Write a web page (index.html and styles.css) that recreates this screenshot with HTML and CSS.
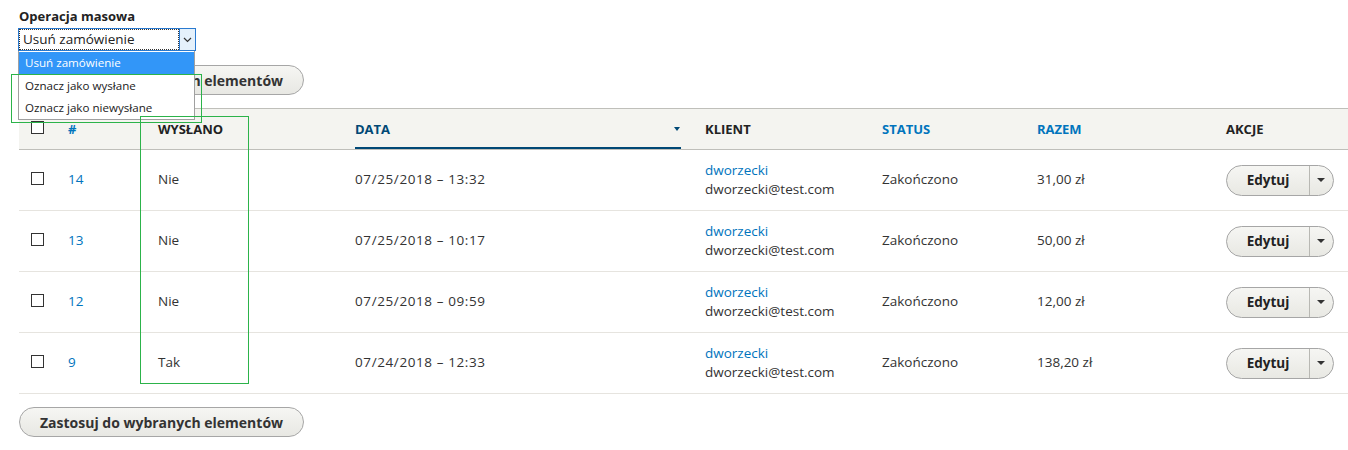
FILE: index.html
```html
<!DOCTYPE html>
<html lang="pl">
<head>
<meta charset="utf-8">
<title>Zamówienia</title>
<link rel="stylesheet" href="styles.css">
</head>
<body>
<div class="page">
  <div class="bulk">
    <label class="bulk-label">Operacja masowa</label>
    <div class="select-wrap">
      <div class="select">
        <span class="select-value">Usuń zamówienie</span>
        <span class="select-arrow"><svg width="9" height="6" viewBox="0 0 9 6"><path d="M1 1 L4.5 4.5 L8 1" fill="none" stroke="#333" stroke-width="1.2"/></svg></span>
      </div>
      <ul class="select-list">
        <li class="opt opt-active">Usuń zamówienie</li>
        <li class="opt">Oznacz jako wysłane</li>
        <li class="opt">Oznacz jako niewysłane</li>
      </ul>
    </div>
    <button class="btn btn-apply">Zastosuj do wybranych elementów</button>
  </div>

  <table class="orders">
    <colgroup>
      <col style="width:37px"><col style="width:90px"><col style="width:197px"><col style="width:350px"><col style="width:177px"><col style="width:155px"><col style="width:189px"><col style="width:134px">
    </colgroup>
    <thead>
      <tr>
        <th><span class="cb"></span></th>
        <th class="sortable">#</th>
        <th>WYSŁANO</th>
        <th class="active"><span class="active-inner">DATA<span class="sort-tri"></span></span></th>
        <th>KLIENT</th>
        <th class="sortable">STATUS</th>
        <th class="sortable">RAZEM</th>
        <th>AKCJE</th>
      </tr>
    </thead>
    <tbody>
      <tr>
        <td><span class="cb"></span></td>
        <td><a class="link">14</a></td>
        <td>Nie</td>
        <td class="date">07/25/2018 – 13:32</td>
        <td><a class="link">dworzecki</a><br>dworzecki@test.com</td>
        <td>Zakończono</td>
        <td>31,00 zł</td>
        <td><div class="dropbutton"><span class="db-main">Edytuj</span><span class="db-toggle"><span class="tri"></span></span></div></td>
      </tr>
      <tr>
        <td><span class="cb"></span></td>
        <td><a class="link">13</a></td>
        <td>Nie</td>
        <td class="date">07/25/2018 – 10:17</td>
        <td><a class="link">dworzecki</a><br>dworzecki@test.com</td>
        <td>Zakończono</td>
        <td>50,00 zł</td>
        <td><div class="dropbutton"><span class="db-main">Edytuj</span><span class="db-toggle"><span class="tri"></span></span></div></td>
      </tr>
      <tr>
        <td><span class="cb"></span></td>
        <td><a class="link">12</a></td>
        <td>Nie</td>
        <td class="date">07/25/2018 – 09:59</td>
        <td><a class="link">dworzecki</a><br>dworzecki@test.com</td>
        <td>Zakończono</td>
        <td>12,00 zł</td>
        <td><div class="dropbutton"><span class="db-main">Edytuj</span><span class="db-toggle"><span class="tri"></span></span></div></td>
      </tr>
      <tr>
        <td><span class="cb"></span></td>
        <td><a class="link">9</a></td>
        <td>Tak</td>
        <td class="date">07/24/2018 – 12:33</td>
        <td><a class="link">dworzecki</a><br>dworzecki@test.com</td>
        <td>Zakończono</td>
        <td>138,20 zł</td>
        <td><div class="dropbutton"><span class="db-main">Edytuj</span><span class="db-toggle"><span class="tri"></span></span></div></td>
      </tr>
    </tbody>
  </table>

  <button class="btn btn-apply btn-bottom">Zastosuj do wybranych elementów</button>

  <div class="mark mark-options"></div>
  <div class="mark mark-column"></div>
</div>
</body>
</html>
```

FILE: styles.css
```css
* { box-sizing: border-box; }
html, body { margin: 0; padding: 0; background: #fff; }
body {
  font-family: "Open Sans", "DejaVu Sans", sans-serif;
  font-size: 13.5px;
  color: #333;
}
.page {
  position: relative;
  padding: 7px 0 0 19px;
  height: 450px;
}
.bulk { display: flex; flex-direction: column; align-items: flex-start; }
.bulk-label {
  font-weight: bold;
  font-size: 13px;
  line-height: 18px;
  color: #222;
}
.select-wrap { position: relative; margin-top: 3px; margin-left: -1px; }
.select {
  display: flex;
  width: 178px;
  height: 23px;
  border: 1px solid #2a7ad0;
  background: #fff;
}
.select-value {
  flex: 1;
  margin: 1px;
  padding: 0 3px;
  line-height: 19px;
  font-size: 13.5px;
  color: #222;
  outline: 1px dotted #333;
}
.select-arrow {
  width: 16px;
  border-left: 1px solid #2a7ad0;
  background: #e5f1fb;
  display: flex;
  align-items: center;
  justify-content: center;
}
.select-list {
  position: absolute;
  top: 23px;
  left: 0;
  width: 177px;
  margin: 0;
  padding: 1px 0 1px;
  list-style: none;
  background: #fff;
  border: 1px solid #a0a0a0;
  border-top: none;
  z-index: 5;
}
.opt {
  height: 22px;
  line-height: 23px;
  padding-left: 6px;
  font-size: 11.6px;
  color: #222;
}
.opt-active { background: #3296f8; color: #fff; line-height: 22px; }

.btn {
  font-family: inherit;
  font-weight: bold;
  font-size: 14px;
  color: #333;
  height: 30px;
  padding: 0;
  border: 1px solid #a6a6a6;
  border-radius: 20px;
  background: linear-gradient(#f6f6f3, #e8e8e3);
  white-space: nowrap;
}
.btn-apply { margin-top: 14px; width: 285px; }
.btn-bottom { margin-top: 13px; }

.orders {
  margin-top: 13px;
  width: 1329px;
  table-layout: fixed;
  border-collapse: collapse;
}
.orders th {
  height: 41px;
  background: #f4f4f0;
  border-top: 1px solid #bfbfba;
  border-bottom: 1px solid #bfbfba;
  text-align: left;
  padding: 0 12px;
  font-size: 13px;
  font-weight: bold;
  color: #222;
}
.orders th.sortable { color: #0074bd; }
.orders th.active { color: #004875; padding-bottom: 0; vertical-align: bottom; }
.active-inner {
  display: flex;
  align-items: center;
  justify-content: space-between;
  height: 39px;
  border-bottom: 2px solid #004875;
  padding-top: 1px;
}
.sort-tri {
  width: 0; height: 0;
  border-left: 3.5px solid transparent;
  border-right: 3.5px solid transparent;
  border-top: 4px solid #004875;
  margin-right: 1px;
}
.orders td {
  height: 61px;
  padding: 0 12px 1px;
  border-bottom: 1px solid #e6e4df;
  line-height: 19px;
  vertical-align: middle;
}
.orders td.date { letter-spacing: 0.6px; }
.link { color: #0074bd; text-decoration: none; }
.cb {
  display: block;
  width: 13px;
  height: 13px;
  margin-bottom: 3px;
  border: 1px solid #333;
  background: #fff;
}
.dropbutton {
  display: inline-flex;
  height: 31px;
  margin-top: 1px;
  border: 1px solid #a6a6a6;
  border-radius: 20px;
  background: linear-gradient(#f6f6f3, #e8e8e3);
  overflow: hidden;
}
.db-main {
  width: 82px;
  display: flex;
  align-items: center;
  justify-content: center;
  font-weight: bold;
  font-size: 13.5px;
  color: #222;
}
.db-toggle {
  width: 24px;
  border-left: 1px solid #b8b8b3;
  display: flex;
  align-items: center;
  justify-content: center;
}
.tri {
  width: 0; height: 0;
  border-left: 4px solid transparent;
  border-right: 4px solid transparent;
  border-top: 4px solid #333;
  margin-right: 2px;
}
.mark {
  position: absolute;
  border: 1px solid #2cb34a;
  pointer-events: none;
  z-index: 10;
}
.mark-options { left: 11px; top: 74px; width: 191px; height: 49px; }
.mark-column { left: 140px; top: 116px; width: 109px; height: 268px; }
```
